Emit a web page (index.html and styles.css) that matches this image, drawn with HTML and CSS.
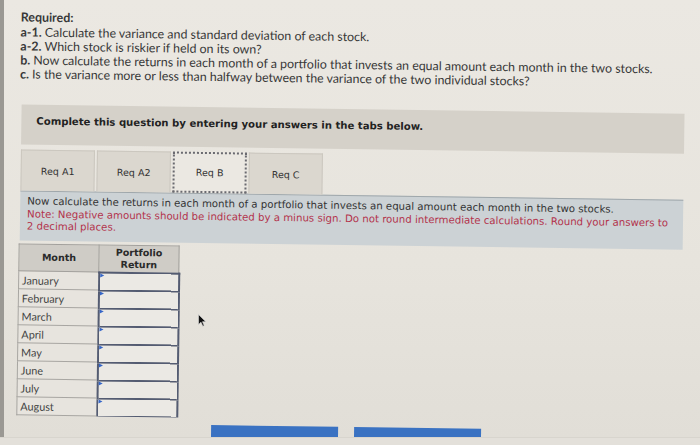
FILE: index.html
```html
<!DOCTYPE html>
<html>
<head>
<meta charset="utf-8">
<link rel="stylesheet" href="styles.css">
</head>
<body>
<div class="screen">
  <div class="page">
    <div class="required">
      <div class="req-title">Required:</div>
      <div class="req-line"><b>a-1.</b> Calculate the variance and standard deviation of each stock.</div>
      <div class="req-line"><b>a-2.</b> Which stock is riskier if held on its own?</div>
      <div class="req-line"><b>b.</b> Now calculate the returns in each month of a portfolio that invests an equal amount each month in the two stocks.</div>
      <div class="req-line"><b>c.</b> Is the variance more or less than halfway between the variance of the two individual stocks?</div>
    </div>

    <div class="instr">Complete this question by entering your answers in the tabs below.</div>

    <div class="tabs">
      <div class="tab">Req A1</div>
      <div class="tab">Req A2</div>
      <div class="tab active">Req B</div>
      <div class="tab">Req C</div>
    </div>

    <div class="panel">
      <div>Now calculate the returns in each month of a portfolio that invests an equal amount each month in the two stocks.</div>
      <div class="note">Note: Negative amounts should be indicated by a minus sign. Do not round intermediate calculations. Round your answers to<br>2 decimal places.</div>
    </div>

    <table class="grid">
      <thead>
        <tr><th>Month</th><th>Portfolio<br>Return</th></tr>
      </thead>
      <tbody>
        <tr><td class="m">January</td><td class="in"><span class="flag"></span></td></tr>
        <tr><td class="m">February</td><td class="in"><span class="flag"></span></td></tr>
        <tr><td class="m">March</td><td class="in"><span class="flag"></span></td></tr>
        <tr><td class="m">April</td><td class="in"><span class="flag"></span></td></tr>
        <tr><td class="m">May</td><td class="in"><span class="flag"></span></td></tr>
        <tr><td class="m">June</td><td class="in"><span class="flag"></span></td></tr>
        <tr><td class="m">July</td><td class="in"><span class="flag"></span></td></tr>
        <tr><td class="m">August</td><td class="in"><span class="flag"></span></td></tr>
      </tbody>
    </table>

    <div class="nav">
      <div class="btn">&#8249;&nbsp;&nbsp;Req A2</div>
      <div class="btn">Req C&nbsp;&nbsp;&#8250;</div>
    </div>
  </div>
  <svg class="cursor" width="9" height="13" viewBox="0 0 9 13">
    <path d="M0.5 0.5 L0.5 10.5 L3 8.2 L4.8 12.2 L6.2 11.6 L4.5 7.7 L7.8 7.7 Z" fill="#111" stroke="#ddd" stroke-width="0.6"/>
  </svg>
</div>
<div class="footer"></div>
</body>
</html>
```

FILE: styles.css
```css
html, body {
  margin: 0;
  padding: 0;
}
body {
  width: 700px;
  height: 445px;
  overflow: hidden;
  background: #e4e1da;
}
.screen {
  position: relative;
  width: 700px;
  height: 437px;
  box-sizing: border-box;
  border-left: 4px solid #9a9893;
  overflow: hidden;
  background: linear-gradient(180deg, #ebe8e2 0%, #e7e4dd 60%, #e1ded7 100%);
}
.page {
  transform: rotate(0.8deg);
  transform-origin: 346px 222px;
  padding-top: 14px;
}
.required {
  padding-left: 14px;
  font-family: "Lato", "Liberation Sans", sans-serif;
  font-size: 12.4px;
  color: #383838;
}
.req-title {
  font-weight: bold;
  line-height: 15px;
  margin-bottom: 1px;
}
.req-line {
  line-height: 14px;
  white-space: nowrap;
}
.req-line b {
  font-weight: bold;
}
.instr {
  margin: 22.5px 0 0 16px;
  width: 663px;
  height: 40px;
  box-sizing: border-box;
  padding: 10px 0 0 15px;
  background: #d5d1c9;
  font-family: "DejaVu Sans", sans-serif;
  font-weight: bold;
  font-size: 10.1px;
  line-height: 13px;
  color: #222;
}
.tabs {
  display: flex;
  gap: 2px;
  margin: 5.5px 0 0 16px;
  height: 41px;
}
.tab {
  width: 74px;
  box-sizing: border-box;
  display: flex;
  align-items: center;
  justify-content: center;
  background: #dbd7cf;
  border: 1px solid #cbc7bf;
  border-bottom: none;
  font-family: "DejaVu Sans", sans-serif;
  font-size: 9.5px;
  color: #333;
}
.tab.active {
  background: #ebe8e2;
  border: 2px dotted #6a6a70;
}
.panel {
  margin-left: 16px;
  width: 663px;
  height: 50px;
  box-sizing: border-box;
  padding: 4px 8px 0 7px;
  background: #ccd2d5;
  border-top: 1px solid #9fa7ab;
  font-family: "DejaVu Sans", sans-serif;
  font-size: 10.2px;
  line-height: 12.5px;
  color: #333;
}
.panel div {
  white-space: nowrap;
}
.note {
  color: #b3324c;
}
.grid {
  margin: 3px 0 0 15px;
  border-collapse: collapse;
  width: 160px;
  table-layout: fixed;
}
.grid th {
  width: 80px;
  height: 27px;
  box-sizing: border-box;
  padding: 0;
  background: #cfccc6;
  border: 1px solid #a3a19d;
  font-family: "DejaVu Sans", sans-serif;
  font-weight: bold;
  font-size: 9.5px;
  line-height: 11.5px;
  color: #2a2a2a;
  text-align: center;
  vertical-align: middle;
}
.grid td {
  height: 18px;
  box-sizing: border-box;
  padding: 0;
}
.grid td.m {
  background: #e7e4de;
  border: 1px solid #a8a6a2;
  padding-left: 3px;
  font-family: "Lato", "Liberation Sans", sans-serif;
  font-size: 10.8px;
  color: #444;
  line-height: 16px;
}
.grid td.in {
  position: relative;
  background: #ebe9e4;
  border: 2px solid #545c72;
  border-bottom-width: 1.5px;
}
.flag {
  position: absolute;
  left: 0;
  top: 0;
  width: 0;
  height: 0;
  border-top: 2px solid transparent;
  border-bottom: 2px solid transparent;
  border-left: 4px solid #3566c8;
}
.nav {
  display: flex;
  gap: 16px;
  margin: 7px 0 0 210px;
}
.btn {
  width: 127px;
  height: 30px;
  display: flex;
  align-items: center;
  justify-content: center;
  background: #3a72c2;
  color: #fff;
  font-family: "DejaVu Sans", sans-serif;
  font-weight: bold;
  font-size: 10px;
}
.cursor {
  position: absolute;
  left: 194px;
  top: 314px;
}
.footer {
  height: 8px;
  background: #e3e0da;
  border-top: 1px solid #d8d5ce;
  box-sizing: border-box;
}
```
